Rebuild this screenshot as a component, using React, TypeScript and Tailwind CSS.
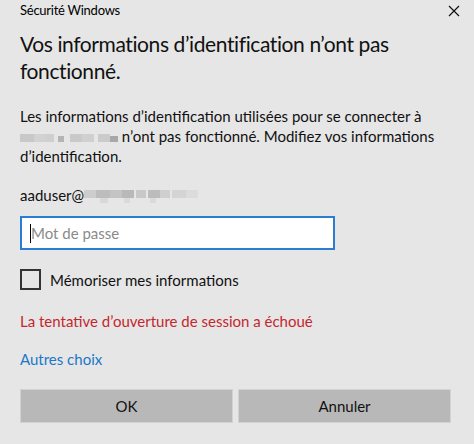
import React from "react";

const F = { fontFamily: 'Lato, "Noto Sans", sans-serif' };

function Blur({ blocks }: { blocks: [number, number, number, number, string][] }) {
  return (
    <span className="relative inline-block align-middle" style={{ width: Math.max(...blocks.map((b) => b[0] + b[2])), height: 14 }}>
      {blocks.map((b, i) => (
        <span
          key={i}
          className="absolute"
          style={{ left: b[0], top: b[1], width: b[2], height: b[3], background: b[4] }}
        />
      ))}
    </span>
  );
}

export default function App() {
  return (
    <div className="w-[474px] h-[444px] bg-[#e6e6e6] text-[#000] px-[20px] overflow-hidden whitespace-nowrap" style={F}>
      <div className="flex items-center justify-between h-[20px] text-[13px] leading-[20px] tracking-[-0.25px]">
        <span>Sécurité Windows</span>
        <svg width="12" height="12" viewBox="0 0 12 12" className="mr-[-6px] mt-[1px]">
          <path d="M1 1 L11 11 M11 1 L1 11" stroke="#111" strokeWidth="1.2" />
        </svg>
      </div>
      <div className="mt-[10px] text-[21px] leading-[27px] tracking-[-0.4px] text-[#111]">
        Vos informations d’identification n’ont pas
        <br />
        fonctionné.
      </div>
      <div className="mt-[22px] text-[15px] leading-[20px] text-[#111]">
        Les informations d’identification utilisées pour se connecter à
        <br />
        <Blur
          blocks={[
            [0, 3, 14, 8, "#c8c8c8"],
            [14, 3, 12, 8, "#d2d2d2"],
            [26, 3, 8, 8, "#cfcfcf"],
            [38, 5, 6, 6, "#b4b4b4"],
            [50, 3, 12, 8, "#c9c9c9"],
            [62, 3, 12, 8, "#d0d0d0"],
            [78, 3, 12, 8, "#cbcbcb"],
            [90, 5, 8, 6, "#a8a8a8"],
          ]}
        />{" "}
        n’ont pas fonctionné. Modifiez vos informations
        <br />
        d’identification.
      </div>
      <div className="mt-[19px] text-[15px] leading-[20px] text-[#111] flex items-center">
        <span>aaduser@</span>
        <Blur
          blocks={[
            [0, 2, 12, 8, "#cdcdcd"],
            [12, 2, 14, 8, "#bdbdbd"],
            [26, 2, 12, 8, "#c4c4c4"],
            [38, 2, 12, 8, "#b9b9b9"],
            [52, 2, 10, 8, "#c8c8c8"],
            [64, 2, 12, 8, "#bcbcbc"],
            [76, 2, 10, 8, "#cfcfcf"],
            [88, 2, 14, 8, "#d4d4d4"],
            [102, 2, 12, 8, "#dcdcdc"],
            [16, 10, 8, 5, "#d8d8d8"],
            [40, 10, 6, 5, "#dadada"],
            [66, 10, 6, 5, "#dadada"],
          ]}
        />
      </div>
      <div className="mt-[11px] w-[315px] h-[34px] bg-white border-2 border-[#2b7cd3] flex items-center pl-[8px] text-[15px]">
        <span className="w-[1px] h-[19px] bg-black" />
        <span className="text-[#8a8a8a]">Mot de passe</span>
      </div>
      <div className="mt-[19px] flex items-center h-[21px]">
        <span className="w-[21px] h-[21px] border-2 border-[#333] bg-transparent" />
        <span className="ml-[9px] text-[15px] leading-[20px] text-[#111]">Mémoriser mes informations</span>
      </div>
      <div className="mt-[21px] text-[15px] leading-[20px] text-[#c4262e]">
        La tentative d’ouverture de session a échoué
      </div>
      <div className="mt-[18px] text-[15px] leading-[20px] text-[#1a78c8]">Autres choix</div>
      <div className="mt-[20px] flex gap-[5px]">
        <div className="w-[213px] h-[34px] bg-[#b8b8b8] border border-[#d2d2d2] flex items-center justify-center text-[15px] text-[#111]">
          OK
        </div>
        <div className="w-[213px] h-[34px] bg-[#b8b8b8] border border-[#d2d2d2] flex items-center justify-center text-[15px] text-[#111]">
          Annuler
        </div>
      </div>
    </div>
  );
}
